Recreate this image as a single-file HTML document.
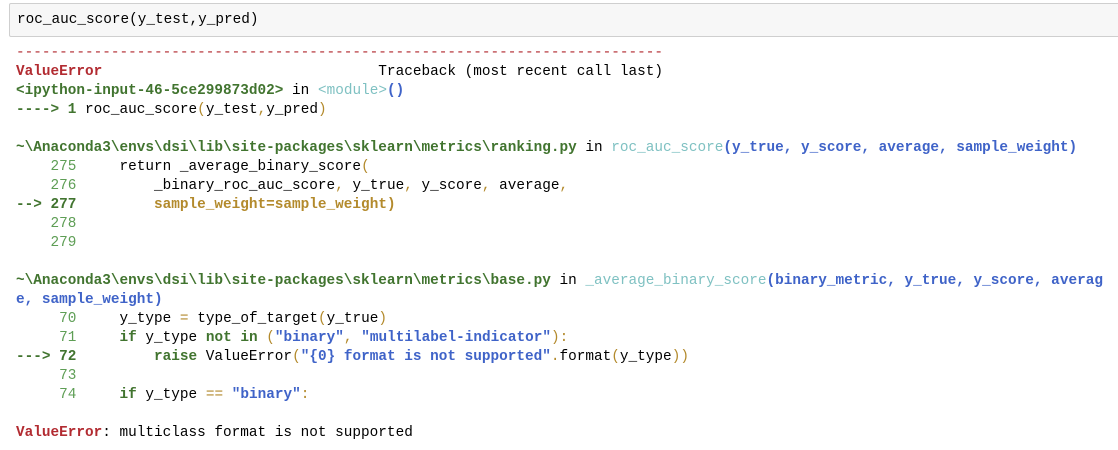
<!DOCTYPE html>
<html><head><meta charset="utf-8"><style>
body{margin:0;background:#fff;width:1118px;height:450px;overflow:hidden;font-family:"Liberation Mono",monospace;font-size:14.38px;color:#000}
.in{position:absolute;left:9px;top:3px;width:1115px;height:32px;background:#f7f7f7;border:1px solid #cfcfcf;border-radius:2px}
.in pre{margin:0;position:absolute;left:7px;top:8px;line-height:19px;font:inherit}
.out{position:absolute;left:16px;top:44px;margin:0;font:inherit;line-height:19px;white-space:pre}
.r{color:#b22b31}.rb{color:#b22b31;font-weight:bold}
.g{color:#41742f;font-weight:bold}.lg{color:#5e9e55}
.c{color:#7fc1c2}.b{color:#3f63c8;font-weight:bold}.y{color:#b38a2c}.yb{color:#b38a2c;font-weight:bold}
</style></head><body>
<div class="in"><pre>roc_auc_score(y_test,y_pred)</pre></div>
<pre class="out"><span class="r">---------------------------------------------------------------------------</span>
<span class="rb">ValueError</span>                                Traceback (most recent call last)
<span class="g">&lt;ipython-input-46-5ce299873d02&gt;</span> in <span class="c">&lt;module&gt;</span><span class="b">()</span>
<span class="g">----&gt; 1</span> roc_auc_score<span class="y">(</span>y_test<span class="y">,</span>y_pred<span class="y">)</span>

<span class="g">~\Anaconda3\envs\dsi\lib\site-packages\sklearn\metrics\ranking.py</span> in <span class="c">roc_auc_score</span><span class="b">(y_true, y_score, average, sample_weight)</span>
<span class="lg">    275</span>     return _average_binary_score<span class="y">(</span>
<span class="lg">    276</span>         _binary_roc_auc_score<span class="y">,</span> y_true<span class="y">,</span> y_score<span class="y">,</span> average<span class="y">,</span>
<span class="g">--&gt; 277</span><span class="yb">         sample_weight=sample_weight)</span>
<span class="lg">    278</span>
<span class="lg">    279</span>

<span class="g">~\Anaconda3\envs\dsi\lib\site-packages\sklearn\metrics\base.py</span> in <span class="c">_average_binary_score</span><span class="b">(binary_metric, y_true, y_score, averag
e, sample_weight)</span>
<span class="lg">     70</span>     y_type <span class="y">=</span> type_of_target<span class="y">(</span>y_true<span class="y">)</span>
<span class="lg">     71</span>     <span class="g">if</span> y_type <span class="g">not</span> <span class="g">in</span> <span class="y">(</span><span class="b">"binary"</span><span class="y">,</span> <span class="b">"multilabel-indicator"</span><span class="y">):</span>
<span class="g">---&gt; 72</span>         <span class="g">raise</span> ValueError<span class="y">(</span><span class="b">"{0} format is not supported"</span><span class="y">.</span>format<span class="y">(</span>y_type<span class="y">))</span>
<span class="lg">     73</span>
<span class="lg">     74</span>     <span class="g">if</span> y_type <span class="y">==</span> <span class="b">"binary"</span><span class="y">:</span>

<span class="rb">ValueError</span>: multiclass format is not supported</pre>
</body></html>
